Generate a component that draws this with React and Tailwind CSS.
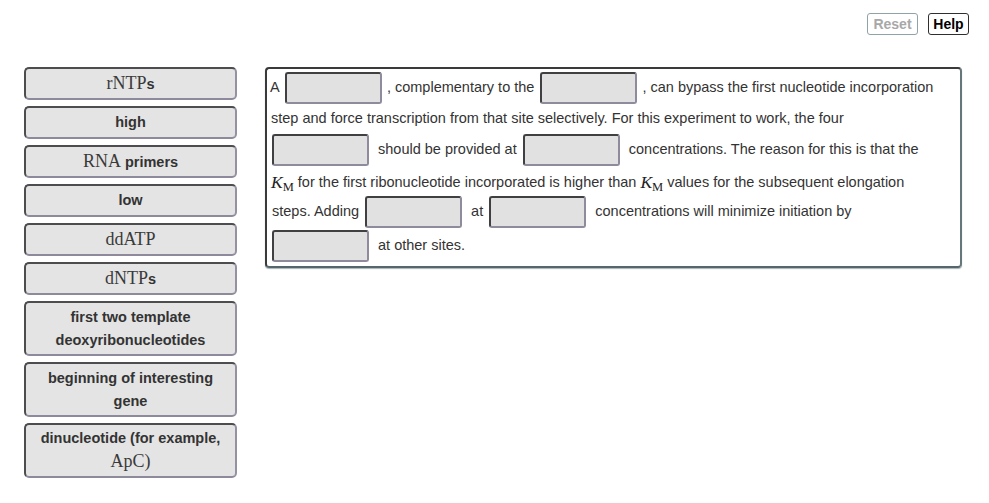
import React from "react";

const sans = { fontFamily: '"Liberation Sans", Arial, sans-serif' };
const serif = { fontFamily: '"Liberation Serif", "Times New Roman", serif' };

function M({ children }) {
  return (
    <span className="text-[18px] font-normal text-[#3a3a3a]" style={serif}>
      {children}
    </span>
  );
}

const tiles = [
  [<M key="a">rNTP</M>, "s"],
  ["high"],
  [<M key="a">RNA</M>, " primers"],
  ["low"],
  [<M key="a">ddATP</M>],
  [<M key="a">dNTP</M>, "s"],
  ["first two template", <br key="b" />, "deoxyribonucleotides"],
  ["beginning of interesting", <br key="b" />, "gene"],
  ["dinucleotide (for example,", <br key="b" />, <M key="a">ApC)</M>],
];

function Tile({ parts }) {
  const tall = parts.length === 3 && parts[1].type === "br";
  return (
    <div
      className={`flex w-[213px] items-center justify-center rounded-[5px] border-2 border-[#4d4d4f] border-r-[#9690a3] border-b-[#8f899c] bg-[#e4e4e4] text-center text-[14.5px] font-bold leading-[23px] text-[#333] ${
        tall ? "h-[55px]" : "h-[33px]"
      }`}
    >
      <span>{parts}</span>
    </div>
  );
}

function Box({ first }) {
  return (
    <span
      className={`inline-block h-[32px] w-[97px] shrink-0 rounded-[3px] border-2 border-[#404042] border-r-[#8f8a9c] border-b-[#8f8a9c] bg-[#e1e1e1] ${
        first ? "mr-[5px]" : "ml-[2px] mr-[5px]"
      }`}
    />
  );
}

function T({ children }) {
  return <span className="whitespace-pre">{children}</span>;
}

function KM() {
  return (
    <span style={serif} className="text-[#222]">
      <span className="text-[17.5px] italic">K</span>
      <span className="relative top-[3px] text-[12.5px]">M</span>
    </span>
  );
}

export default function App() {
  return (
    <div className="h-[503px] w-[989px] bg-white pt-[13px] text-[#333]" style={sans}>
      <div className="flex justify-end gap-[10px] pr-[20px]">
        <button className="h-[22px] w-[51px] rounded-[3px] border-[1.5px] border-[#8fa3a8] bg-white text-[14px] leading-none font-bold text-[#a8a8a8]">
          Reset
        </button>
        <button className="h-[22px] w-[41px] rounded-[3px] border-[1.5px] border-[#2f2f2f] bg-white text-[14px] leading-none font-bold text-black">
          Help
        </button>
      </div>

      <div className="mt-[32px] flex items-start pl-[24px]">
        <div className="flex flex-col gap-[6px]">
          {tiles.map((p, i) => (
            <Tile key={i} parts={p} />
          ))}
        </div>

        <div className="ml-[28px] w-[697px] rounded-[4px] border-2 border-[#3a3a3a] border-r-[#66777c] border-b-[#55676d] px-[3px] pt-[2px] pb-[3px] text-[14.5px] text-[#333] shadow-[0_1px_1px_rgba(80,100,105,0.5)]">
          <div className="flex h-[34px] items-center">
            <T>A </T>
            <Box />
            <T>, complementary to the </T>
            <Box />
            <T>, can bypass the first nucleotide incorporation</T>
          </div>
          <div className="flex h-[28px] items-center pl-[1px]">
            <T>step and force transcription from that site selectively. For this experiment to work, the four</T>
          </div>
          <div className="flex h-[34px] items-center pl-[2px]">
            <Box first />
            <T> should be provided at </T>
            <Box />
            <T> concentrations. The reason for this is that the</T>
          </div>
          <div className="flex h-[28px] items-center pl-[1px] pt-[3px]">
            <KM />
            <T> for the first ribonucleotide incorporated is higher than </T>
            <KM />
            <T> values for the subsequent elongation</T>
          </div>
          <div className="flex h-[34px] items-center pl-[2px]">
            <T>steps. Adding </T>
            <Box />
            <T> at </T>
            <Box />
            <T> concentrations will minimize initiation by</T>
          </div>
          <div className="flex h-[34px] items-center pl-[2px]">
            <Box first />
            <T> at other sites.</T>
          </div>
        </div>
      </div>
    </div>
  );
}
